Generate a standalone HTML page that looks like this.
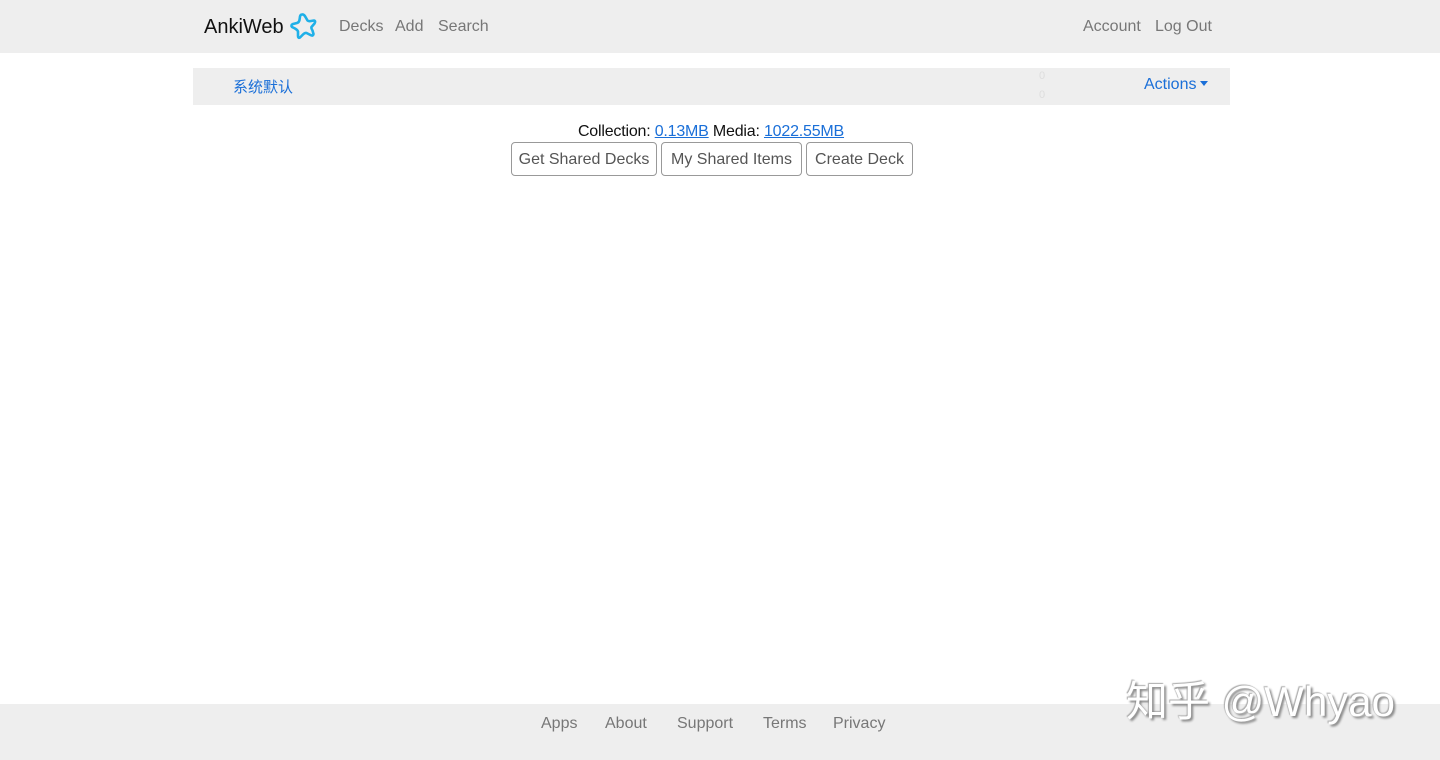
<!DOCTYPE html>
<html><head><meta charset="utf-8"><style>
body{margin:0;width:1440px;height:760px;position:relative;background:#fff;font-family:"Liberation Sans","Noto Sans CJK SC",sans-serif;font-size:16px;overflow:hidden}
.nav{position:absolute;left:0;top:0;width:1440px;height:53px;background:#eeeeee}
.nav span{position:absolute;top:18px;color:#777;font-size:16px}
.brand{position:absolute;left:204px;top:16px;font-size:20px;color:#111}
.bar{position:absolute;left:193px;top:68px;width:1037px;height:37px;background:#eeeeee}
.a{color:#1a6fd8}
.btn{position:absolute;top:142px;height:32px;border:1px solid #999;border-radius:4px;color:#555;font-size:16px;line-height:33px;text-align:center;box-sizing:content-box}
.foot{position:absolute;left:0;top:704px;width:1440px;height:56px;background:#eeeeee}
.foot span{position:absolute;top:11px;color:#777;font-size:16px}
</style></head><body>
<div class="nav">
<div class="brand">AnkiWeb</div>
<svg style="position:absolute;left:288px;top:11px" width="30" height="30" viewBox="0 0 30 30"><path d="M14 3.5 Q16 3 17.5 6 L19.5 9.5 Q20.5 10.5 23 10 L26 9.5 Q28 10 26.5 12.5 L23.5 16 Q23 17 24.5 19.5 L25.5 23 Q25 25.5 22.5 24 L18.5 22 Q17 21.5 15 23.5 L12 26.5 Q10 27.5 10 25 L10 20.5 Q9.5 19 7 17.5 L4 16 Q2.5 14 5 13 L9 12 Q11 11.5 11.5 9 L12 5.5 Q12.5 3.5 14 3.5 Z" fill="none" stroke="#1fb0e8" stroke-width="2.6" stroke-linejoin="round"/></svg>
<span style="left:339px">Decks</span><span style="left:395px">Add</span><span style="left:438px">Search</span>
<span style="left:1083px">Account</span><span style="left:1155px">Log Out</span>
</div>
<div class="bar">
<span class="a" style="position:absolute;left:40px;top:8px;font-size:15px">系统默认</span>
<span style="position:absolute;left:846px;top:2px;font-size:11px;color:#ddd">0</span>
<span style="position:absolute;left:846px;top:21px;font-size:11px;color:#ddd">0</span>
<span class="a" style="position:absolute;left:951px;top:8px">Actions<span style="display:inline-block;margin-left:4px;border-left:4px solid transparent;border-right:4px solid transparent;border-top:5px solid #1a6fd8;vertical-align:3px"></span></span>
</div>
<div style="position:absolute;left:0;width:1422px;top:123px;text-align:center;color:#111;letter-spacing:-0.2px">Collection: <span class="a" style="text-decoration:underline">0.13MB</span> Media: <span class="a" style="text-decoration:underline">1022.55MB</span></div>
<div class="btn" style="left:511px;width:144px">Get Shared Decks</div>
<div class="btn" style="left:661px;width:139px">My Shared Items</div>
<div class="btn" style="left:806px;width:105px">Create Deck</div>
<div class="foot">
<span style="left:541px">Apps</span><span style="left:605px">About</span><span style="left:677px">Support</span><span style="left:763px">Terms</span><span style="left:833px">Privacy</span>
</div>
<div style="position:absolute;left:1126px;top:668px;font-size:42px;color:#fff;text-shadow:2px 2px 2px #888,-1px -1px 1px #aaa">知乎 @Whyao</div>
</body></html>
